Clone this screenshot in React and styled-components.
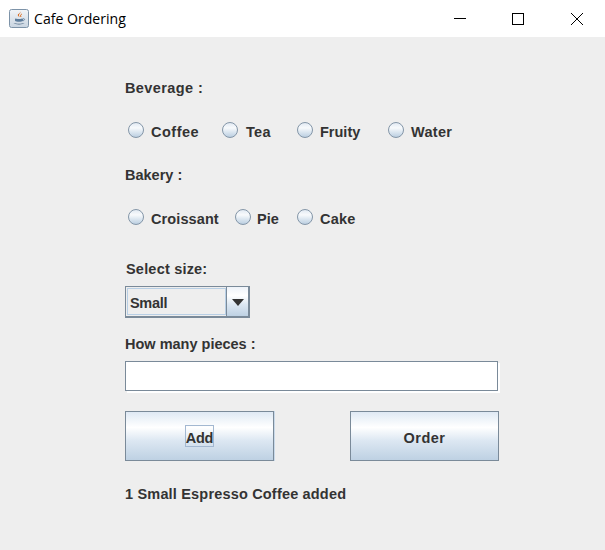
import React from "react";
import styled, { createGlobalStyle } from "styled-components";

const GlobalStyle = createGlobalStyle`
  html, body {
    margin: 0;
    padding: 0;
    background: #eeeeee;
  }
  * { box-sizing: border-box; }
`;

const Window = styled.div`
  width: 605px;
  height: 550px;
  overflow: hidden;
  display: flex;
  flex-direction: column;
  background: #eeeeee;
  font-family: "Liberation Sans", Arial, sans-serif;
`;

const TitleBar = styled.div`
  height: 37px;
  flex: none;
  display: flex;
  align-items: center;
  background: #ffffff;
  padding-left: 9px;
`;

const TitleText = styled.span`
  margin-left: 5px;
  font-family: "Open Sans", "Liberation Sans", sans-serif;
  font-size: 14.1px;
  color: #000000;
`;

const WindowButtons = styled.div`
  margin-left: auto;
  display: flex;
`;

const WindowButton = styled.div`
  width: ${({ $width }) => $width}px;
  height: 36px;
  display: flex;
  align-items: center;
  justify-content: center;
`;

const Form = styled.div`
  flex: 1;
  display: flex;
  flex-direction: column;
  align-items: flex-start;
  padding: 41px 0 0 125px;
`;

const Label = styled.div`
  font-size: 14.5px;
  font-weight: 700;
  line-height: 20px;
  color: #333333;
  letter-spacing: ${({ $spacing }) => $spacing || 0}px;
  margin-top: ${({ $top }) => $top || 0}px;
  margin-left: ${({ $left }) => $left || 0}px;
`;

const RadioRow = styled.div`
  display: flex;
  align-items: center;
  height: 20px;
  padding-left: 3px;
  margin-top: 24px;
`;

const RadioOption = styled.label`
  display: flex;
  align-items: center;
  width: ${({ $width }) => $width}px;
  font-size: 14.5px;
  font-weight: 700;
  color: #333333;
  letter-spacing: ${({ $spacing }) => $spacing || 0}px;
`;

const RadioDot = styled.span`
  flex: none;
  width: 16px;
  height: 16px;
  margin-top: -4px;
  margin-right: ${({ $gap }) => $gap || 7}px;
  border-radius: 50%;
  border: 1.5px solid #8496a8;
  background: linear-gradient(#e2eaf3 0%, #f8fafc 35%, #dbe6f0 65%, #bccfe1 100%);
`;

const Combo = styled.div`
  display: flex;
  width: 125px;
  height: 32px;
  margin-top: 7px;
  border: 1px solid #7a8a99;
  border-right-width: 2px;
  border-bottom-width: 2px;
`;

const ComboValue = styled.div`
  width: 99px;
  margin: 1px 0 1px 1px;
  padding: 2px 0 0 2px;
  display: flex;
  align-items: center;
  border: 1px solid #b8cfe5;
  font-size: 14.5px;
  font-weight: 700;
  letter-spacing: -0.3px;
  color: #333333;
`;

const ComboArrow = styled.div`
  flex: 1;
  display: flex;
  align-items: center;
  justify-content: center;
  border-left: 1px solid #7a8a99;
  background: linear-gradient(#eef3f9 0%, #ffffff 30%, #dce7f2 60%, #bed1e3 100%);
`;

const Arrow = styled.span`
  width: 0;
  height: 0;
  margin-top: 1px;
  border-left: 6px solid transparent;
  border-right: 6px solid transparent;
  border-top: 7px solid #333333;
`;

const NumberInput = styled.input`
  display: block;
  width: 373px;
  height: 30px;
  margin-top: 7px;
  padding: 0 4px;
  background: #ffffff;
  border: 1px solid #7a8a99;
  box-shadow: 2px 2px 0 #ffffff;
  outline: none;
`;

const ButtonRow = styled.div`
  display: flex;
  gap: 76px;
  margin-top: 20px;
`;

const Button = styled.button`
  width: 149px;
  height: 50px;
  padding: 0;
  display: flex;
  align-items: center;
  justify-content: center;
  border: 1px solid #7a8a99;
  background: linear-gradient(#dfe9f4 0%, #ffffff 32%, #dce7f2 60%, #bed1e3 100%);
  box-shadow: ${({ $focused }) => ($focused ? "1px 0 0 #c9d9e9" : "none")};
  font-family: inherit;
  font-size: 14.5px;
  font-weight: 700;
  letter-spacing: ${({ $spacing }) => $spacing || 0}px;
  color: #333333;
`;

const ButtonText = styled.span`
  border: 1px solid ${({ $focused }) => ($focused ? "#a3b8d1" : "transparent")};
  padding-top: 4px;
  line-height: 16px;
`;

const JavaIcon = () => (
  <svg width="20" height="19" viewBox="0 0 20 19">
    <defs>
      <linearGradient id="javaBg" x1="0" y1="0" x2="0" y2="1">
        <stop offset="0" stopColor="#f2f4f7" />
        <stop offset="1" stopColor="#c9d5e1" />
      </linearGradient>
    </defs>
    <rect x="0.5" y="0.5" width="19" height="18" rx="2" fill="url(#javaBg)" stroke="#7d93a8" />
    <path d="M11 2.500c1.500 1.800-2 2.800-.8 4.800.3.500.8 1 .8 1-2-1-2.800-2.200-1.800-3.400C10 5 11.300 4 11 2.500z" fill="#dc6a1c" />
    <path d="M12.800 5c-1.200.7-1.700 1.500-.8 3" fill="none" stroke="#dc6a1c" strokeWidth="1" />
    <path d="M6 9.500c1.500.6 6.500.6 8 0v2.200c-1 1.300-7 1.300-8 0z" fill="#5d7c9b" />
    <path d="M14 9.800c1.800-.6 2.300 1.200.2 2" fill="none" stroke="#5d7c9b" strokeWidth="0.9" />
    <path d="M4.500 14c2.300.9 8.700.9 11 0-1 1.900-10 1.900-11 0z" fill="#45617e" />
  </svg>
);

const App = () => (
  <>
    <GlobalStyle />
    <Window>
      <TitleBar>
        <JavaIcon />
        <TitleText>Cafe Ordering</TitleText>
        <WindowButtons>
          <WindowButton $width={54}>
            <svg width="12" height="12" viewBox="0 0 12 12">
              <path d="M0 5.500h12" stroke="#000" strokeWidth="1" />
            </svg>
          </WindowButton>
          <WindowButton $width={62}>
            <svg width="12" height="12" viewBox="0 0 12 12">
              <rect x="0.500" y="0.500" width="11" height="11" fill="none" stroke="#000" />
            </svg>
          </WindowButton>
          <WindowButton $width={56}>
            <svg width="12" height="12" viewBox="0 0 12 12">
              <path d="M0 0l12 12M12 0L0 12" stroke="#000" strokeWidth="1" />
            </svg>
          </WindowButton>
        </WindowButtons>
      </TitleBar>
      <Form>
        <Label $spacing={0.4}>Beverage :</Label>
        <RadioRow>
          <RadioOption $width={94} $spacing={0.5}><RadioDot />Coffee</RadioOption>
          <RadioOption $width={75} $spacing={0.3}><RadioDot $gap={8} />Tea</RadioOption>
          <RadioOption $width={91}><RadioDot />Fruity</RadioOption>
          <RadioOption $width={80} $spacing={0.3}><RadioDot />Water</RadioOption>
        </RadioRow>
        <Label $top={23}>Bakery :</Label>
        <RadioRow>
          <RadioOption $width={107} $spacing={0.1}><RadioDot />Croissant</RadioOption>
          <RadioOption $width={62}><RadioDot $gap={6} />Pie</RadioOption>
          <RadioOption $width={80} $spacing={0.2}><RadioDot />Cake</RadioOption>
        </RadioRow>
        <Label $top={30} $left={1} $spacing={0.2}>Select size:</Label>
        <Combo>
          <ComboValue>Small</ComboValue>
          <ComboArrow><Arrow /></ComboArrow>
        </Combo>
        <Label $top={16}>How many pieces :</Label>
        <NumberInput type="text" />
        <ButtonRow>
          <Button $focused $spacing={-0.3}><ButtonText $focused>Add</ButtonText></Button>
          <Button $spacing={0.5}><ButtonText>Order</ButtonText></Button>
        </ButtonRow>
        <Label $top={23} $spacing={0.18}>1 Small Espresso Coffee added</Label>
      </Form>
    </Window>
  </>
);

export default App;
